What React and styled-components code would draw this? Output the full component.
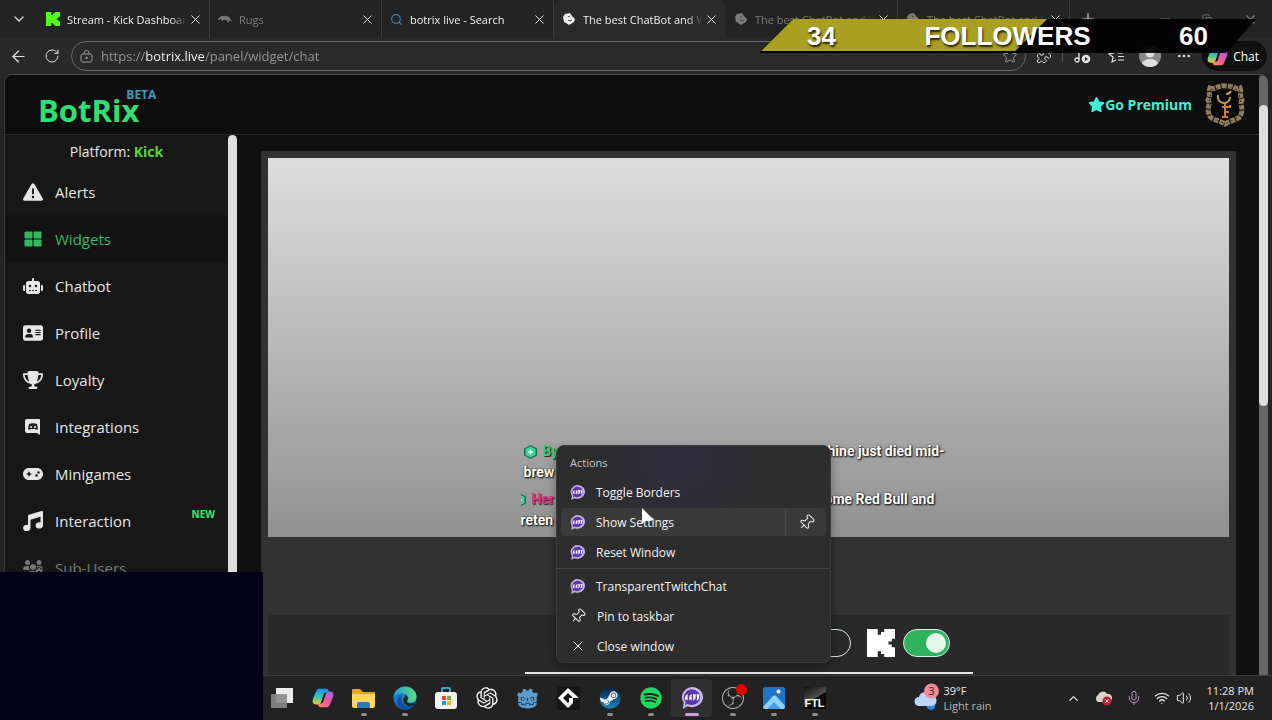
import { useState } from 'react'
import styled, { createGlobalStyle } from 'styled-components'
import {
  FaTriangleExclamation, FaRobot, FaAddressCard, FaTrophy, FaGamepad, FaMusic,
  FaUsersGear, FaStar, FaSteam, FaSpotify,
} from 'react-icons/fa6'
import { SiGodotengine, SiObsstudio } from 'react-icons/si'
import { RiOpenaiFill } from 'react-icons/ri'
import {
  X, Plus, Minus, ArrowLeft, RotateCw, ChevronDown, ChevronUp, Search, Star,
  Copy, Pin, Mic, Wifi, Volume2, Puzzle, Ellipsis,
} from 'lucide-react'

const GlobalStyle = createGlobalStyle`
  * { box-sizing: border-box; }
  body {
    margin: 0;
    background: #242424;
    color: #e8e8e8;
    font-family: "Open Sans", "Noto Sans", sans-serif;
    overflow: hidden;
  }
  button {
    border: 0;
    padding: 0;
    background: none;
    color: inherit;
    font: inherit;
  }
  a { color: inherit; text-decoration: none; }
`

const Screen = styled.div`
  position: relative;
  display: flex;
  flex-direction: column;
  height: 100vh;
  overflow: hidden;
`

/* ---------- browser ---------- */

const TabStrip = styled.div`
  display: flex;
  height: 38px;
  background: #232323;
`
const StripButton = styled.button`
  display: flex;
  align-items: center;
  justify-content: center;
  width: ${(p) => p.$width}px;
  color: ${(p) => p.$color || '#d8d8d8'};
`
const Tab = styled.div`
  display: flex;
  align-items: center;
  gap: 7px;
  flex: 0 1 172px;
  min-width: 0;
  padding: 0 6px 0 8px;
  border-right: 1px solid ${(p) => (p.$active ? '#282828' : '#3a3a3a')};
  border-radius: ${(p) => (p.$active ? '8px 8px 0 0' : '0')};
  background: ${(p) => (p.$active ? '#2a2a2a' : 'transparent')};
  color: ${(p) => (p.$dim ? '#7c7c7c' : '#efefef')};
  svg { flex: none; }
`
const TabTitle = styled.span`
  flex: 1;
  overflow: hidden;
  white-space: nowrap;
  font-size: 11px;
  mask-image: linear-gradient(90deg, #000 calc(100% - 16px), transparent);
`
const TabClose = styled.button`
  display: flex;
  margin-left: -6px;
  color: #f0f0f0;
`
const WindowButtons = styled.div`
  display: flex;
  margin-left: auto;
`

const Toolbar = styled.div`
  display: flex;
  align-items: center;
  height: 36px;
  padding: 0 5px 0 1px;
  background: #292929;
`
const ToolButton = styled.button`
  display: flex;
  align-items: center;
  justify-content: center;
  width: 34px;
  height: 30px;
  color: #e2e2e2;
`
const ToolDivider = styled.span`
  width: 1px;
  height: 12px;
  margin: 0 2px 0 1px;
  background: #555;
`
const AddressBar = styled.label`
  display: flex;
  align-items: center;
  gap: 7px;
  flex: 1;
  height: 30px;
  margin: 0 1px 0 2px;
  padding: 0 7px;
  border: 1px solid #686868;
  border-radius: 15px;
  background: #2a2a2a;
  color: #999;
`
const AddressInput = styled.input`
  flex: 1;
  min-width: 0;
  padding: 0;
  border: 0;
  outline: 0;
  font: 13px "Open Sans", sans-serif;
  color: transparent;
  /* keeps the host brighter than the rest of the url */
  background: linear-gradient(90deg, #999 44px, #fff 44px, #fff 104px, #999 104px);
  background-clip: text;
`
const Portrait = styled.span`
  width: 22px;
  height: 22px;
  border-radius: 50%;
  overflow: hidden;
  svg { display: block; }
`
const ChatPill = styled.button`
  display: flex;
  align-items: center;
  gap: 5px;
  height: 30px;
  margin-left: 1px;
  padding: 0 8px 0 5px;
  border-radius: 15px;
  background: #101010;
  color: #fff;
  font-size: 12px;
`

/* ---------- page ---------- */

const Viewport = styled.div`
  display: flex;
  flex: 1;
  min-height: 0;
  margin: 0 4px 0 4px;
  border-top: 1px solid #4a4a4a;
  border-left: 1px solid #3c3c3c;
  border-radius: 8px 8px 0 0;
  overflow: hidden;
`
const Page = styled.div`
  display: flex;
  flex-direction: column;
  flex: 1;
  min-width: 0;
  background: #0e0e0e;
`
const ScrollTrack = styled.div`
  width: 9px;
  padding-top: ${(p) => p.$offset}px;
  background: ${(p) => p.$track};
  border-radius: 5px 5px 0 0;
`
const ScrollThumb = styled.div`
  height: ${(p) => p.$length};
  border-radius: 5px;
  background: #dedede;
`
const Header = styled.header`
  display: flex;
  align-items: center;
  height: 60px;
  padding: 0 14px 0 33px;
  border-bottom: 1px solid #2b2b2b;
`
const Logo = styled.a`
  position: relative;
  color: #2fe070;
  font-size: 31px;
  line-height: 40px;
  font-weight: 700;
  margin-top: 10px;
`
const Beta = styled.sup`
  position: absolute;
  top: -3px;
  right: -17px;
  color: #3c9cc6;
  font-size: 12px;
  line-height: 16px;
`
const Premium = styled.a`
  display: flex;
  align-items: center;
  margin-left: auto;
  margin-right: 13px;
  color: #40f0d8;
  font-size: 14px;
  font-weight: 700;
`
const Body = styled.div`
  display: flex;
  flex: 1;
  min-height: 0;
`
const Sidebar = styled.nav`
  flex: none;
  width: 223px;
  overflow: hidden;
  background: #171717;
`
const Platform = styled.div`
  font-size: 14px;
  line-height: 33px;
  text-align: center;
  b { color: #53dc2c; }
`
const NavLink = styled.a`
  display: flex;
  align-items: center;
  gap: 12px;
  height: 47px;
  padding: 0 13px 0 18px;
  background: ${(p) => (p.$active ? '#131313' : 'transparent')};
  color: ${(p) => (p.$active ? '#35b863' : p.$dim ? '#777' : '#e6e6e6')};
  font-size: 15px;
  svg { width: 20px; height: 20px; }
`
const NewTag = styled.span`
  margin: 0 0 14px auto;
  color: #2cf06a;
  font-size: 10px;
  line-height: 14px;
  font-weight: 700;
`
const Main = styled.main`
  flex: 1;
  display: flex;
  flex-direction: column;
  min-width: 0;
  padding: 16px 23px 0 24px;
  background: #101010;
`
const Panel = styled.section`
  flex: 1;
  display: flex;
  flex-direction: column;
  gap: 78px;
  padding: 7px 7px 0;
  background: #323232;
`
const Preview = styled.div`
  display: flex;
  flex-direction: column;
  align-items: center;
  justify-content: flex-end;
  height: 379px;
  padding-bottom: 6px;
  background: linear-gradient(#dedede, #919191);
`
const ChatFeed = styled.div`
  display: flex;
  flex-direction: column;
  gap: 6px;
  width: 456px;
  overflow: hidden;
`
const Message = styled.div`
  display: grid;
  grid-template-columns: 304px 1fr;
  padding-left: ${(p) => p.$indent}px;
  color: #fff;
  font: 700 14px/21px Roboto, sans-serif;
  text-shadow: 1px 1px 2px #000, 0 0 2px #222;
`
const Sender = styled.span`
  display: flex;
  align-items: center;
  gap: 6px;
  color: ${(p) => p.$color};
  text-shadow: 1px 1px 1px #222;
`
const Settings = styled.div`
  flex: 1;
  padding-top: 13px;
  background: #292929;
`
const SettingsForm = styled.div`
  display: flex;
  align-items: center;
  justify-content: flex-end;
  width: 448px;
  height: 46px;
  margin: 0 auto;
  padding: 0 23px 15px 0;
  border-bottom: 2px solid #e8e8e8;
`
const ToggleLabel = styled.label`
  display: flex;
  align-items: center;
  gap: 8px;
  margin-left: 16px;
`
const Toggle = styled.input.attrs({ type: 'checkbox' })`
  appearance: none;
  width: 47px;
  height: 28px;
  margin: 0;
  padding: 3px;
  display: flex;
  border: 1px solid #d8efe0;
  border-radius: 14px;
  &::before {
    content: "";
    width: 20px;
    height: 20px;
    border-radius: 50%;
    background: #e4f8ea;
  }
  &:checked {
    justify-content: flex-end;
    background: #2fb35f;
  }
`

/* ---------- overlays ---------- */

const Cover = styled.div`
  position: absolute;
  left: 0;
  bottom: 0;
  width: 263px;
  height: 148px;
  background: #03001a;
`
const Goal = styled.div`
  position: absolute;
  top: 19px;
  right: 16px;
  display: flex;
  align-items: center;
  justify-content: space-between;
  width: 497px;
  height: 34px;
  padding: 0 48px;
  background: rgba(0, 0, 0, 0.92);
  clip-path: polygon(34px 0, 100% 0, calc(100% - 30px) 100%, 0 100%);
  color: #fff;
  font: 700 26px/32px "Liberation Sans", Arial, sans-serif;
  text-shadow: 1px 2px 2px rgba(0, 0, 0, 0.8);
  span { position: relative; }
`
const GoalFill = styled.div`
  position: absolute;
  top: 0;
  left: 0;
  width: 58%;
  height: 32px;
  background: #a9a021;
  clip-path: polygon(34px 0, 100% 0, calc(100% - 32px) 100%, 2px 100%);
`
const Menu = styled.div`
  position: absolute;
  left: 556px;
  bottom: 57px;
  width: 275px;
  padding: 2px 0 0;
  border: 1px solid #3b3b3b;
  border-radius: 8px;
  background: radial-gradient(circle at 120px 10px, #2f2d40, #2d2d2d 90px);
  box-shadow: 0 4px 10px rgba(0, 0, 0, 0.35);
  font-size: 12px;
`
const MenuTitle = styled.div`
  padding-left: 13px;
  color: #c4c4c4;
  font-size: 11px;
  line-height: 30px;
`
const MenuRow = styled.div`
  display: flex;
  height: 28px;
  margin: 0 4px 2px;
  border-radius: 4px;
  background: ${(p) => (p.$hover ? '#3a3a3a' : 'transparent')};
`
const MenuItem = styled.button`
  display: flex;
  flex: 1;
  align-items: center;
  gap: 11px;
  padding-left: 9px;
  color: #f2f2f2;
  text-align: left;
`
const PinButton = styled.button`
  display: flex;
  align-items: center;
  justify-content: center;
  width: 41px;
  border-left: 1px solid #474747;
`
const MenuRule = styled.hr`
  height: 1px;
  margin: 2px 0 3px;
  border: 0;
  background: #444;
`
const TiltedPin = styled(Pin)`
  transform: rotate(45deg);
`
const Pointer = styled.svg`
  position: absolute;
  left: 641px;
  top: 508px;
`

/* ---------- taskbar ---------- */

const Taskbar = styled.footer`
  display: flex;
  align-items: center;
  height: 45px;
  padding: 0 18px 0 261px;
  border-top: 1px solid #3e3e3e;
  background: #222;
  font-size: 11px;
  line-height: 15px;
`
const AppButton = styled.button`
  position: relative;
  display: flex;
  align-items: center;
  justify-content: center;
  width: 41px;
  height: 38px;
  border-radius: 4px;
  background: ${(p) => (p.$active ? '#303030' : 'transparent')};
  &::after {
    content: "";
    position: absolute;
    bottom: 1px;
    width: ${(p) => (p.$active ? '14px' : p.$running ? '6px' : '0')};
    height: 3px;
    border-radius: 2px;
    background: ${(p) => (p.$active ? '#d59ae0' : '#8c8c8c')};
  }
`
const RecordDot = styled.i`
  position: absolute;
  top: 5px;
  right: 6px;
  width: 11px;
  height: 11px;
  border-radius: 50%;
  background: #e80000;
`
const Weather = styled.button`
  display: flex;
  align-items: center;
  gap: 4px;
  margin-left: auto;
  margin-right: 67px;
  text-align: left;
  small { display: block; color: #b5b5b5; font-size: 11px; }
`
const TrayButton = styled.button`
  display: flex;
  align-items: center;
  justify-content: center;
  width: ${(p) => p.$width || 30}px;
  gap: 6px;
`
const Clock = styled.button`
  margin-left: 10px;
  text-align: right;
`

/* ---------- drawings ---------- */

const KickMark = ({ size = 14, color = '#53fc18' }) => (
  <svg width={size} height={size} viewBox="0 0 26 29" fill={color} preserveAspectRatio="none">
    <path d="M0 0h10v6h3V3h3V0h10v10h-3v3h-3v3h3v3h3v10H16v-3h-3v-3h-3v6H0z" />
  </svg>
)
const RugMark = () => (
  <svg width="14" height="14" viewBox="0 0 14 14" fill="#777">
    <path d="M0 7c2-3 5-4 8-3 3 0 5 3 6 6l-3-2v3l-3-3H6l-2 1-1-2-3 1z" />
  </svg>
)
const BotrixMark = () => (
  <svg width="14" height="14" viewBox="0 0 14 14">
    <path d="M1 5l2-3 5-1 2 3 3 3-1 3-5 3-3-2-2-1z" fill="currentColor" />
    <path d="M6 5l2-1M6 8l2 1 2-1" stroke="#444" fill="none" />
  </svg>
)
const LockMark = () => (
  <svg width="15" height="15" viewBox="0 0 15 15" fill="none" stroke="currentColor">
    <rect x="2" y="5" width="11" height="8" rx="2" />
    <path d="M5 5V4a2.500 2.500 0 0 1 5 0v1" />
    <circle cx="7.500" cy="9" r=".8" fill="currentColor" />
  </svg>
)
const MediaMark = () => (
  <svg width="17" height="16" viewBox="0 0 17 16" fill="none" stroke="currentColor" strokeWidth="1.300">
    <path d="M5 12V3l6-2v4" />
    <circle cx="3" cy="12" r="2" />
    <circle cx="12" cy="11" r="4.300" fill="currentColor" stroke="none" />
    <path d="M11 9l3 2-3 2z" fill="#222" stroke="none" />
  </svg>
)
const FavoritesMark = () => (
  <svg width="17" height="16" viewBox="0 0 17 16" fill="none" stroke="currentColor" strokeWidth="1.200">
    <path d="M8 12l-4 2 1-5-4-3 5-1 2-4 2 4h5M10 8.500h6M10 12h6" />
  </svg>
)
const CopilotMark = ({ size = 22 }) => (
  <svg width={size} height={size} viewBox="0 0 24 24">
    <defs>
      <linearGradient id="coolSide" x1="0" y1="0" x2="0" y2="1">
        <stop offset="0" stopColor="#1f8df0" /><stop offset=".5" stopColor="#31c5b4" /><stop offset="1" stopColor="#f5c62e" />
      </linearGradient>
      <linearGradient id="warmSide" x1="1" y1="0" x2="0" y2="1">
        <stop offset="0" stopColor="#9b62f0" /><stop offset=".5" stopColor="#f0569f" /><stop offset="1" stopColor="#ff9150" />
      </linearGradient>
    </defs>
    <path d="M8 2h8c2 0 2 2 3 4h-4c-2 0-2 1-3 4l-2 6c-1 3-2 3-4 3-5 0-6-2-5-6l3-7c1-3 2-4 4-4z" fill="url(#coolSide)" />
    <path d="M16 22H9c-2 0-2-2-3-4h4c2 0 2-1 3-4l2-6c1-2 2-3 4-3 4 0 5 2 4 6l-3 7c-1 3-2 4-4 4z" fill="url(#warmSide)" />
  </svg>
)
const Crest = () => (
  <svg width="40" height="44" viewBox="0 0 40 44" fill="none">
    <ellipse cx="20" cy="21" rx="20" ry="20" fill="#070707" />
    <path d="M5 5c5 2 8-3 15-2 7-1 10 4 15 2 2 5-1 7 2 12-3 5 2 8-1 14-1 6-8 5-16 10-8-5-15-4-16-10-3-6 2-9-1-14 3-5 0-7 2-12z" stroke="#8f7d5f" strokeWidth="5" strokeDasharray="5 1" />
    <path d="M6 6c5 2 8-3 14-2 6-1 9 4 14 2 2 5-1 7 2 12-3 5 2 8-1 13-1 6-8 5-15 10-7-5-14-4-15-10-3-5 2-8-1-13 3-5 0-7 2-12z" stroke="#3c3123" strokeWidth="1" strokeDasharray="2 3" />
    <path d="M13 12c-1 5 2 8 6 8s6-3 6-6m-4-3c2 0 4-1 5-3" stroke="#c99a52" strokeWidth="2" />
    <path d="M20 20v14m0-10h5v-2m-5 7h4m-7 5h6m-6-10h3" stroke="#c87c32" strokeWidth="2" />
  </svg>
)
const WidgetsMark = () => (
  <svg viewBox="0 0 20 20" fill="currentColor">
    <path d="M2 3h7v6H2zM11 3h7v6h-7zM2 11h7v6H2zM11 11h7v6h-7z" stroke="currentColor" strokeLinejoin="round" />
  </svg>
)
const DiscordTile = () => (
  <svg viewBox="0 0 20 20">
    <path d="M4 2h12a1 1 0 0 1 1 1v15l-3-2H4a2 2 0 0 1-2-2V4a2 2 0 0 1 2-2z" fill="currentColor" />
    <path d="M6 7c2-1 6-1 8 0l1 5c-1 1-2 1-3 0H8c-1 1-2 1-3 0z" fill="#222" />
    <circle cx="8" cy="10" r="1" fill="#e6e6e6" /><circle cx="12" cy="10" r="1" fill="#e6e6e6" />
  </svg>
)
const BadgeMark = ({ cut = 0 }) => (
  <svg width={13 - cut} height="14" viewBox={`${cut} 0 ${13 - cut} 14`}>
    <path d="M6.500 0L13 3.500v7L6.500 14 0 10.500v-7z" fill="#176e50" />
    <path d="M6.500 1.500L11.500 4v6l-5 2.500L1.500 10V4z" fill="#38d49a" />
    <path d="M6.500 4l1 2 2 1-2 1-1 2-1-2-2-1 2-1z" fill="#eafff6" />
  </svg>
)
const BubbleMark = ({ size = 15 }) => (
  <svg width={size} height={size} viewBox="0 0 24 24">
    <path d="M12 0a12 11 0 1 1-5 21l-5 3 1-7A12 11 0 0 1 12 0z" fill="#c9b3ec" />
    <path d="M12 2.500a9.500 8.500 0 1 1-5 16L4.500 20l.5-4A9.500 8.500 0 0 1 12 2.500z" fill="#5c38a8" />
    <path d="M4.500 12c0-2 1-3.500 3-4l-.5 2 .5 4h-3zm4.500 0c0-2 1-3.500 3-4l-.5 2 .5 4H9zM13 8h3v2c0 3-1 4-3 5l.5-3zm4 0h3v2c0 3-1 4-3 5l.5-3z" fill="#fff" />
  </svg>
)
const TaskViewMark = () => (
  <svg width="24" height="22" viewBox="0 0 24 22">
    <rect x="6" y="1" width="17" height="15" fill="#ececec" />
    <rect x="1" y="7" width="16" height="14" fill="#888" opacity=".9" />
  </svg>
)
const FolderMark = () => (
  <svg width="25" height="24" viewBox="0 0 25 24">
    <path d="M1 4a1 1 0 0 1 1-1h7l3 3h11a1 1 0 0 1 1 1v5H1z" fill="#e2a526" />
    <path d="M1 8h23v12a2 2 0 0 1-2 2H3a2 2 0 0 1-2-2z" fill="#ffd661" />
    <path d="M6 22v-4a2 2 0 0 1 2-2h9a2 2 0 0 1 2 2v4z" fill="#267db5" />
  </svg>
)
const EdgeMark = () => (
  <svg width="24" height="24" viewBox="0 0 24 24">
    <defs>
      <linearGradient id="edgeTop"><stop offset="0" stopColor="#2496dc" /><stop offset="1" stopColor="#5be07c" /></linearGradient>
    </defs>
    <circle cx="12" cy="12" r="11.500" fill="#1877ca" />
    <path d="M.5 11C2 4 7 .5 12 .5c7 0 11.500 5 11.500 10 0 4-3 6-6 6-3 0-4-1-3-2 2-3 0-7-4-7-4 0-8 1-10 3.500z" fill="url(#edgeTop)" />
    <path d="M9 10c-3 7 3 13 12 9-5 7-17 5-17-3 0-4 3-6 5-6z" fill="#0f4f9e" />
    <path d="M13 9c2 2 2 4 1 6-1 2 3 3 6 2l2-1-1 3c-7 3-12-2-10-7z" fill="#222" />
  </svg>
)
const StoreMark = () => (
  <svg width="24" height="24" viewBox="0 0 24 24">
    <path d="M8 6V3a1 1 0 0 1 1-1h6a1 1 0 0 1 1 1v3" fill="none" stroke="#35a6d8" strokeWidth="2" />
    <rect x="1" y="6" width="22" height="17" rx="3" fill="#f2f2f2" />
    <path d="M8 10h4v4H8z" fill="#e04b2c" /><path d="M13 10h4v4h-4z" fill="#7bb52c" />
    <path d="M8 15h4v4H8z" fill="#2493de" /><path d="M13 15h4v4h-4z" fill="#f2b51f" />
  </svg>
)
const GameMakerMark = () => (
  <svg width="23" height="23" viewBox="0 0 23 23">
    <rect width="23" height="23" fill="#161616" />
    <path d="M11 1l11 10h-6v5l-5 5L1 11zM11 6l-5 5 5 5 1-1v-4h4z" fill="#fff" fillRule="evenodd" />
  </svg>
)
const SteamMark = () => (
  <svg width="22" height="22" viewBox="0 0 22 22">
    <defs>
      <linearGradient id="steamFill" x1="0" y1="0" x2="0" y2="1"><stop offset="0" stopColor="#0c1e42" /><stop offset="1" stopColor="#1c86bd" /></linearGradient>
    </defs>
    <circle cx="11" cy="11" r="10" fill="#f2f2f2" />
    <FaSteam size={22} fill="url(#steamFill)" />
  </svg>
)
const PhotosMark = () => (
  <svg width="22" height="22" viewBox="0 0 22 22">
    <rect width="22" height="22" rx="2" fill="#2173c6" />
    <path d="M0 20L10 9c1-1 2-1 3 0l9 10v1a2 2 0 0 1-2 2H2a2 2 0 0 1-2-2z" fill="#8fd3f8" />
    <path d="M4 22l7-7 7 7z" fill="#3fa0e8" />
    <circle cx="15.500" cy="4.500" r="2" fill="#fff" />
  </svg>
)
const FtlTile = styled.span`
  display: flex;
  align-items: flex-end;
  justify-content: center;
  width: 22px;
  height: 22px;
  background: linear-gradient(150deg, #111, #505050 50%, #080808 52%);
  color: #fff;
  font: 700 11px/12px "Liberation Sans", sans-serif;
`
const WeatherMark = () => (
  <svg width="25" height="30" viewBox="0 0 25 30">
    <path d="M13 19h8c1 5-1 8-4 8s-6-3-4-8z" fill="#2f86e8" />
    <path d="M5 23a4.500 4.500 0 0 1 0-9 6 6 0 0 1 11-2 5.500 5.500 0 1 1 2 11z" fill="#b9d6f8" />
    <circle cx="17.500" cy="8" r="7.500" fill="#f08a9b" />
    <text x="17.500" y="12" textAnchor="middle" fontSize="11" fill="#3b1820">3</text>
  </svg>
)
const CloudErrorMark = () => (
  <svg width="18" height="18" viewBox="0 0 18 18">
    <path d="M3 13a4 4 0 0 1 0-7 5 5 0 0 1 9-1 4 4 0 0 1 2 8z" fill="#d9d5ca" />
    <circle cx="12" cy="12" r="4.500" fill="#c41d3a" />
    <path d="M10.500 10.500l3 3m0-3l-3 3" stroke="#fff" />
  </svg>
)

const tabs = [
  { title: 'Stream - Kick Dashboard', icon: <KickMark /> },
  { title: 'Rugs', icon: <RugMark />, dim: true },
  { title: 'botrix live - Search', icon: <Search size={13} color="#2b8ce0" /> },
  { title: 'The best ChatBot and W', icon: <BotrixMark />, active: true },
  { title: 'The best ChatBot and W', icon: <BotrixMark />, dim: true },
  { title: 'The best ChatBot and W', icon: <BotrixMark />, dim: true },
]

const links = [
  { label: 'Alerts', icon: <FaTriangleExclamation /> },
  { label: 'Widgets', icon: <WidgetsMark />, active: true },
  { label: 'Chatbot', icon: <FaRobot /> },
  { label: 'Profile', icon: <FaAddressCard /> },
  { label: 'Loyalty', icon: <FaTrophy /> },
  { label: 'Integrations', icon: <DiscordTile /> },
  { label: 'Minigames', icon: <FaGamepad /> },
  { label: 'Interaction', icon: <FaMusic />, isNew: true },
  { label: 'Sub-Users', icon: <FaUsersGear />, dim: true },
]

const actions = ['Toggle Borders', 'Show Settings', 'Reset Window']

const apps = [
  { name: 'Task View', icon: <TaskViewMark /> },
  { name: 'Copilot', icon: <CopilotMark /> },
  { name: 'File Explorer', icon: <FolderMark />, running: true },
  { name: 'Edge', icon: <EdgeMark />, running: true },
  { name: 'Store', icon: <StoreMark /> },
  { name: 'ChatGPT', icon: <RiOpenaiFill size={26} color="#f2f2f2" /> },
  { name: 'Godot', icon: <SiGodotengine size={21} color="#5a9bd0" /> },
  { name: 'GameMaker', icon: <GameMakerMark /> },
  { name: 'Steam', icon: <SteamMark />, running: true },
  { name: 'Spotify', icon: <FaSpotify size={22} color="#1ed760" />, running: true },
  { name: 'TransparentTwitchChat', icon: <BubbleMark size={22} />, active: true },
  { name: 'OBS', icon: <SiObsstudio size={22} color="#b8b8b8" />, running: true, recording: true },
  { name: 'Photos', icon: <PhotosMark />, running: true },
  { name: 'FTL game', icon: <FtlTile>FTL</FtlTile>, running: true },
]

function Browser() {
  const [url, setUrl] = useState('https://botrix.live/panel/widget/chat')

  return (
    <>
      <TabStrip>
        <StripButton $width={38} aria-label="Tab actions"><ChevronDown size={16} /></StripButton>
        {tabs.map((tab, i) => (
          <Tab key={i} $active={tab.active} $dim={tab.dim}>
            {tab.icon}
            <TabTitle>{tab.title}</TabTitle>
            <TabClose aria-label="Close tab"><X size={15} strokeWidth={1.5} /></TabClose>
          </Tab>
        ))}
        <StripButton $width={36} aria-label="New tab"><Plus size={18} strokeWidth={1.5} /></StripButton>
        <WindowButtons>
          <StripButton $width={43} $color="#777" aria-label="Minimize"><Minus size={14} /></StripButton>
          <StripButton $width={43} $color="#777" aria-label="Restore"><Copy size={11} /></StripButton>
          <StripButton $width={43} $color="#777" aria-label="Close"><X size={15} /></StripButton>
        </WindowButtons>
      </TabStrip>
      <Toolbar>
        <ToolButton aria-label="Back"><ArrowLeft size={19} strokeWidth={1.5} /></ToolButton>
        <ToolButton aria-label="Reload"><RotateCw size={16} strokeWidth={1.5} /></ToolButton>
        <AddressBar>
          <LockMark />
          <AddressInput aria-label="Address" value={url} onChange={(e) => setUrl(e.target.value)} />
          <Star size={16} strokeWidth={1.5} />
        </AddressBar>
        <ToolButton aria-label="Extensions"><Puzzle size={16} strokeWidth={1.5} /></ToolButton>
        <ToolDivider />
        <ToolButton aria-label="Media"><MediaMark /></ToolButton>
        <ToolButton aria-label="Favorites"><FavoritesMark /></ToolButton>
        <ToolButton aria-label="Account">
          <Portrait>
            <svg width="22" height="22" viewBox="0 0 22 22">
              <rect width="22" height="22" fill="#8a8a8a" />
              <circle cx="11" cy="8" r="4.500" fill="#dedede" />
              <path d="M2 22c1-6 4-8 9-8s8 2 9 8z" fill="#dedede" />
            </svg>
          </Portrait>
        </ToolButton>
        <ToolButton aria-label="More"><Ellipsis size={16} /></ToolButton>
        <ChatPill><CopilotMark size={21} />Chat</ChatPill>
      </Toolbar>
    </>
  )
}

function PlatformToggle({ label, icon, on }) {
  const [checked, setChecked] = useState(on)
  return (
    <ToggleLabel>
      {icon}
      <Toggle aria-label={label} checked={checked} onChange={() => setChecked(!checked)} />
    </ToggleLabel>
  )
}

function Dashboard() {
  return (
    <Viewport>
      <Page>
        <Header>
          <Logo href="#">BotRix<Beta>BETA</Beta></Logo>
          <Premium href="#premium"><FaStar size={17} />Go Premium</Premium>
          <Crest />
        </Header>
        <Body>
          <Sidebar>
            <Platform>Platform: <b>Kick</b></Platform>
            {links.map((link) => (
              <NavLink key={link.label} href="#" $active={link.active} $dim={link.dim}>
                {link.icon}
                {link.label}
                {link.isNew && <NewTag>NEW</NewTag>}
              </NavLink>
            ))}
          </Sidebar>
          <ScrollTrack $offset={0} $track="#171717"><ScrollThumb $length="100%" /></ScrollTrack>
          <Main>
            <Panel>
              <Preview>
                <ChatFeed>
                  <Message $indent={3}>
                    <Sender $color="#2fd072"><BadgeMark />By</Sender>
                    <span>hine just died mid-</span>
                    <span>brew</span>
                  </Message>
                  <Message $indent={0}>
                    <Sender $color="#e0328b"><BadgeMark cut={8} />Her</Sender>
                    <span>ome Red Bull and</span>
                    <span>reten</span>
                  </Message>
                </ChatFeed>
              </Preview>
              <Settings>
                <SettingsForm>
                  <PlatformToggle label="Twitch" on={false} />
                  <PlatformToggle label="Kick" icon={<KickMark size={28} color="#fff" />} on />
                </SettingsForm>
              </Settings>
            </Panel>
          </Main>
        </Body>
      </Page>
      <ScrollTrack $offset={30} $track="#666"><ScrollThumb $length="301px" /></ScrollTrack>
    </Viewport>
  )
}

function JumpList() {
  return (
    <Menu>
      <MenuTitle>Actions</MenuTitle>
      {actions.map((action) => (
        <MenuRow key={action} $hover={action === 'Show Settings'}>
          <MenuItem><BubbleMark />{action}</MenuItem>
          {action === 'Show Settings' && (
            <PinButton aria-label="Pin to this list"><TiltedPin size={17} strokeWidth={1.5} /></PinButton>
          )}
        </MenuRow>
      ))}
      <MenuRule />
      <MenuRow><MenuItem><BubbleMark />TransparentTwitchChat</MenuItem></MenuRow>
      <MenuRow><MenuItem><TiltedPin size={16} strokeWidth={1.5} />Pin to taskbar</MenuItem></MenuRow>
      <MenuRow><MenuItem><X size={16} strokeWidth={1.5} />Close window</MenuItem></MenuRow>
    </Menu>
  )
}

function App() {
  return (
    <Screen>
      <GlobalStyle />
      <Browser />
      <Dashboard />
      <Taskbar>
        {apps.map((app) => (
          <AppButton key={app.name} aria-label={app.name} $running={app.running} $active={app.active}>
            {app.icon}
            {app.recording && <RecordDot />}
          </AppButton>
        ))}
        <Weather>
          <WeatherMark />
          <span>39°F<small>Light rain</small></span>
        </Weather>
        <TrayButton aria-label="Hidden icons"><ChevronUp size={15} /></TrayButton>
        <TrayButton aria-label="OneDrive"><CloudErrorMark /></TrayButton>
        <TrayButton aria-label="Microphone"><Mic size={16} strokeWidth={1.5} color="#c09ac8" /></TrayButton>
        <TrayButton $width={48} aria-label="Network and volume"><Wifi size={16} /><Volume2 size={16} strokeWidth={1.5} /></TrayButton>
        <Clock>11:28 PM<br />1/1/2026</Clock>
      </Taskbar>
      <Cover />
      <JumpList />
      <Pointer width="14" height="20" viewBox="0 0 14 20">
        <path d="M1 0v16l4-3 8-1z" fill="#fff" />
      </Pointer>
      <Goal>
        <GoalFill />
        <span>34</span>
        <span>FOLLOWERS</span>
        <span>60</span>
      </Goal>
    </Screen>
  )
}

export default App
